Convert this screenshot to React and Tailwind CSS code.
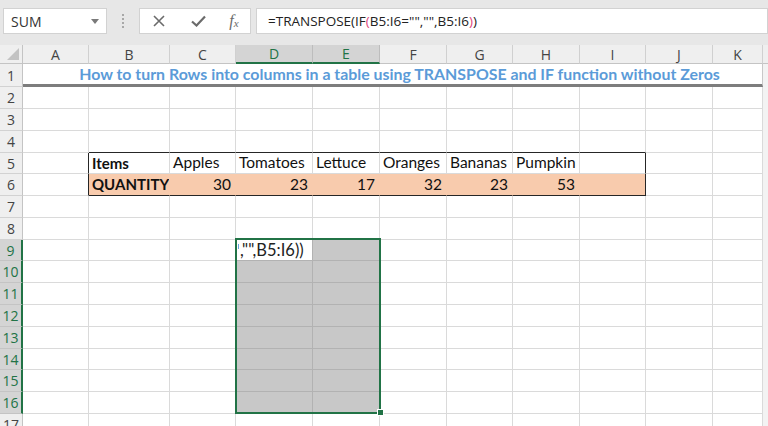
import React from 'react';

const W = ['w-[66px]', 'w-[81px]', 'w-[66px]', 'w-[77px]', 'w-[67px]', 'w-[67px]', 'w-[66px]', 'w-[67px]', 'w-[66px]', 'w-[67px]', 'w-[50px]'];
const LETTERS = ['A', 'B', 'C', 'D', 'E', 'F', 'G', 'H', 'I', 'J', 'K'];
const ROWS = [
  { n: 2, h: 'h-[22px]' },
  { n: 3, h: 'h-[22px]' },
  { n: 4, h: 'h-[22px]' },
  { n: 5, h: 'h-[21px]' },
  { n: 6, h: 'h-[22px]' },
  { n: 7, h: 'h-[22px]' },
  { n: 8, h: 'h-[22px]' },
  { n: 9, h: 'h-[21px]' },
  { n: 10, h: 'h-[22px]' },
  { n: 11, h: 'h-[22px]' },
  { n: 12, h: 'h-[22px]' },
  { n: 13, h: 'h-[22px]' },
  { n: 14, h: 'h-[21px]' },
  { n: 15, h: 'h-[22px]' },
  { n: 16, h: 'h-[22px]' },
  { n: 17, h: 'h-[22px]' },
];

const ROW5 = [null, 'Items', 'Apples', 'Tomatoes', 'Lettuce', 'Oranges', 'Bananas', 'Pumpkin', null, null, null];
const ROW6 = [null, 'QUANTITY', '30', '23', '17', '32', '23', '53', null, null, null];

function inSel(r, c) {
  return r >= 9 && r <= 16 && (c === 3 || c === 4);
}

function cellClasses(r, c) {
  let bg = 'bg-white';
  if (r === 6 && c >= 1 && c <= 8) bg = 'bg-[#f8cbad]';
  if (inSel(r, c) && !(r === 9 && c === 3)) bg = 'bg-[#c8c8c8]';

  let br = 'border-r-[#dadada]';
  if ((r === 5 || r === 6) && (c === 0 || c === 8)) br = 'border-r-[#262626]';
  else if (r === 6 && c >= 1 && c < 8) br = 'border-r-[#f8cbad]';
  else if (inSel(r, c) && c === 3) br = 'border-r-[#b2b2b2]';

  let bb = 'border-b-[#dadada]';
  if ((r === 4 || r === 6) && c >= 1 && c <= 8) bb = 'border-b-[#262626]';
  else if (inSel(r, c) && r < 16) bb = 'border-b-[#b2b2b2]';

  return `${bg} ${br} ${bb}`;
}

function Cell({ r, c }) {
  let content = null;
  if (r === 5 && ROW5[c]) {
    content = (
      <span className={c === 1 ? 'pl-[3px] font-bold text-[15px]' : 'pl-[3px]'}>{ROW5[c]}</span>
    );
  }
  if (r === 6 && ROW6[c]) {
    content =
      c === 1 ? (
        <span className="pl-[3px] font-bold text-[15px]">{ROW6[c]}</span>
      ) : (
        <span className="ml-auto pr-[4px]">{ROW6[c]}</span>
      );
  }
  if (r === 9 && c === 3) {
    content = (
      <span className="pl-[2px] text-[#222] text-[16.5px] flex items-center">
        <span className="inline-block w-[1px] h-[5px] bg-[#6aa5e0] mr-[1px] -mt-[8px]" />
        ,"",B5:I6))
      </span>
    );
  }
  return (
    <div
      className={`${W[c]} h-full shrink-0 flex items-center border-r border-b overflow-hidden whitespace-nowrap ${cellClasses(r, c)}`}
    >
      {content}
    </div>
  );
}

function RowHeader({ n, selected }) {
  return (
    <div
      className={
        selected
          ? "w-[23px] h-full shrink-0 flex items-center justify-center bg-[#d4d4d4] text-[#217346] border-b border-b-[#c4c4c4] border-r-2 border-r-[#217346] text-[14px] font-['Open_Sans',sans-serif]"
          : "w-[23px] h-full shrink-0 flex items-center justify-center bg-[#efefef] text-[#444] border-b border-b-[#d2d2d2] border-r border-r-[#c4c4c4] text-[14px] font-['Open_Sans',sans-serif]"
      }
    >
      {n}
    </div>
  );
}

function Toolbar() {
  return (
    <div className="h-[45px] bg-[#e7e7e7] flex items-start pt-[8px] font-['Open_Sans',sans-serif]">
      <div className="ml-[3px] w-[104px] h-[26px] bg-white border border-[#d2d2d2] flex items-center justify-between pl-[7px] pr-[7px] text-[14px] text-[#333]">
        <span>SUM</span>
        <svg width="8" height="5" viewBox="0 0 8 5">
          <polygon points="0,0 8,0 4,5" fill="#7a7a7a" />
        </svg>
      </div>
      <div className="w-[32px] h-[26px] flex flex-col items-center justify-center gap-[2px]">
        <div className="w-[2px] h-[2px] bg-[#a8a8a8]" />
        <div className="w-[2px] h-[2px] bg-[#a8a8a8]" />
        <div className="w-[2px] h-[2px] bg-[#a8a8a8]" />
        <div className="w-[2px] h-[2px] bg-[#a8a8a8]" />
      </div>
      <div className="w-[112px] h-[26px] bg-white border border-[#d2d2d2] flex items-center">
        <div className="w-[38px] flex justify-center">
          <svg width="12" height="12" viewBox="0 0 12 12">
            <path d="M1 1 L11 11 M11 1 L1 11" stroke="#6b6b6b" strokeWidth="1.6" />
          </svg>
        </div>
        <div className="w-[40px] flex justify-center">
          <svg width="15" height="12" viewBox="0 0 15 12">
            <path d="M1 6.5 L5.5 10.5 L14 1.5" stroke="#6b6b6b" strokeWidth="2.2" fill="none" />
          </svg>
        </div>
        <div className="w-[32px] flex justify-center text-[#6b6b6b] font-['Liberation_Serif',serif] italic text-[16px] leading-none">
          <span>f</span>
          <span className="text-[11px] mt-[5px]">x</span>
        </div>
      </div>
      <div className="ml-[5px] flex-1 h-[26px] bg-white border border-[#d2d2d2] flex items-center pl-[11px] text-[13.5px] text-[#222] whitespace-nowrap">
        =TRANSPOSE(IF<span className="text-[#e0457b]">(</span>B5:I6="","",B5:I6<span className="text-[#e0457b]">)</span>)
      </div>
    </div>
  );
}

function HeaderRow() {
  return (
    <div className="flex h-[19px] bg-[#efefef] text-[14px] font-['Open_Sans',sans-serif]">
      <div className="w-[23px] h-full shrink-0 border-r border-b border-[#c4c4c4] flex items-end justify-end pr-[3px] pb-[3px]">
        <svg width="12" height="12" viewBox="0 0 12 12">
          <polygon points="12,0 12,12 0,12" fill="#c3c3c3" />
        </svg>
      </div>
      {LETTERS.map((l, i) => {
        const sel = i === 3 || i === 4;
        return (
          <div
            key={l}
            className={
              sel
                ? `${W[i]} h-full shrink-0 flex items-center justify-center bg-[#d4d4d4] text-[#217346] border-r border-r-[#bdbdbd] border-b-2 border-b-[#217346]`
                : `${W[i]} h-full shrink-0 flex items-center justify-center text-[#444] border-r border-r-[#d0d0d0] border-b border-b-[#c4c4c4]`
            }
          >
            {l}
          </div>
        );
      })}
      <div className="flex-1 border-b border-[#c4c4c4]" />
    </div>
  );
}

function TitleRow() {
  return (
    <div className="flex h-[23px]">
      <RowHeader n={1} selected={false} />
      <div className="w-[740px] h-full shrink-0 flex items-center justify-center pl-[14px] border-r border-r-[#c8c8c8] border-b-[3px] border-b-[#7d7d7d] bg-white text-[#5b9bd8] font-bold text-[15.9px] whitespace-nowrap">
        How to turn Rows into columns in a table using TRANSPOSE and IF function without Zeros
      </div>
      <div className="flex-1 bg-[#f3f3f3]" />
    </div>
  );
}

export default function App() {
  return (
    <div className="relative w-[768px] h-[426px] overflow-hidden bg-white font-['Lato',sans-serif] text-[15.5px] text-[#111]">
      <Toolbar />
      <HeaderRow />
      <TitleRow />
      {ROWS.map(({ n, h }) => (
        <div key={n} className={`flex ${h}`}>
          <RowHeader n={n} selected={n >= 9 && n <= 16} />
          {LETTERS.map((l, c) => (
            <Cell key={l} r={n} c={c} />
          ))}
          <div className="flex-1 bg-[#f3f3f3]" />
        </div>
      ))}
      <div className="absolute left-[235px] top-[238px] w-[146px] h-[176px] border-2 border-[#217346] pointer-events-none" />
      <div className="absolute left-[377px] top-[409px] w-[7px] h-[7px] bg-[#217346] border border-white pointer-events-none" />
    </div>
  );
}
